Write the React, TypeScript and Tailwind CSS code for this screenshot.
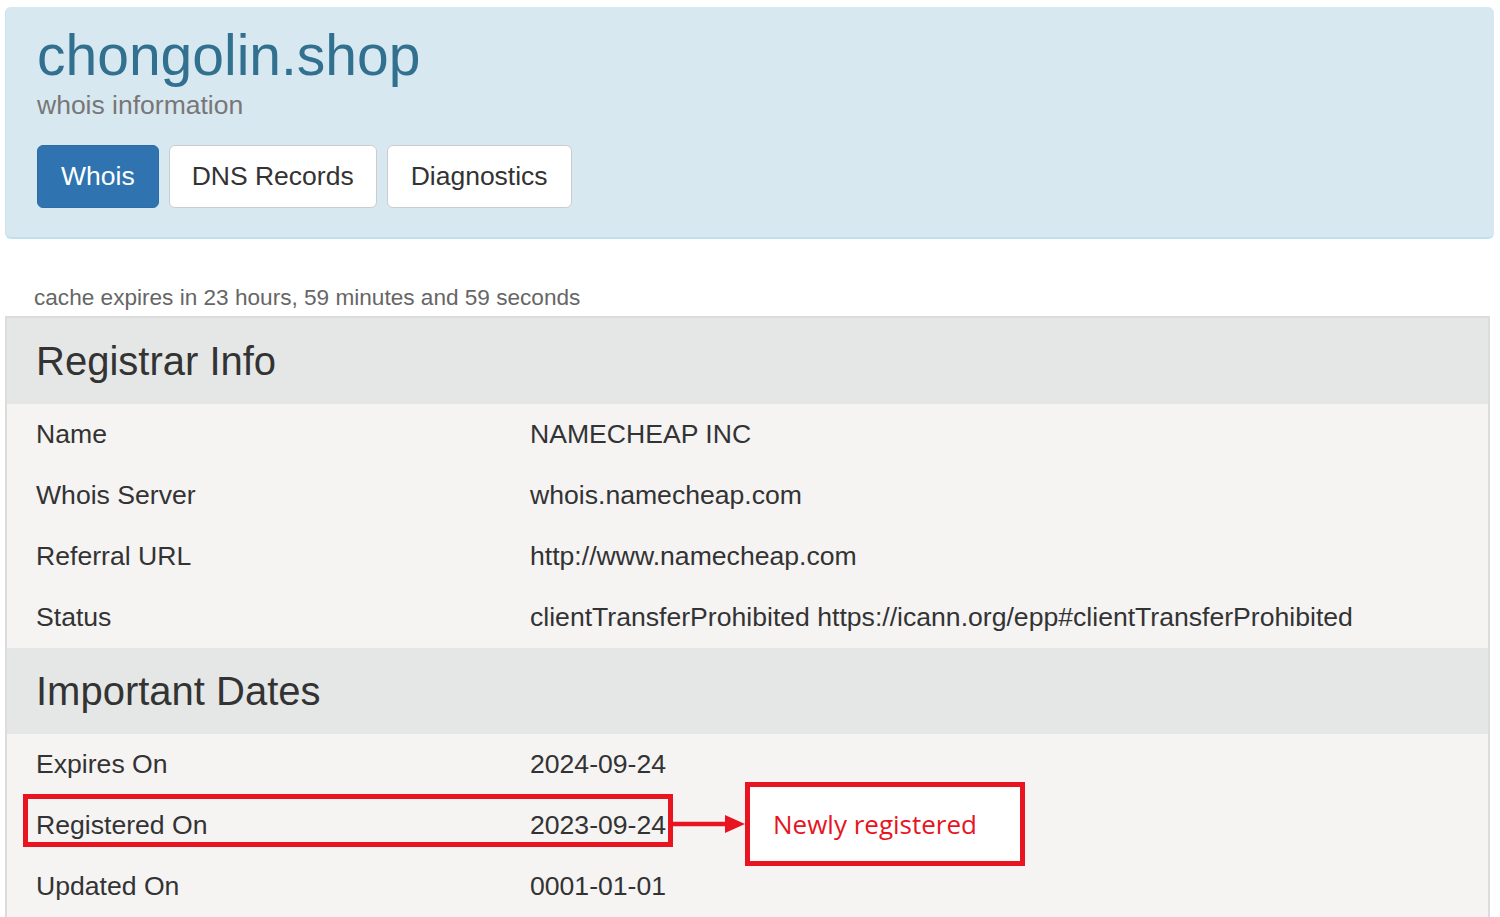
const sans = { fontFamily: '"Liberation Sans", Arial, sans-serif' };

type Row = { label: string; value: string };

const registrar: Row[] = [
  { label: "Name", value: "NAMECHEAP INC" },
  { label: "Whois Server", value: "whois.namecheap.com" },
  { label: "Referral URL", value: "http://www.namecheap.com" },
  {
    label: "Status",
    value:
      "clientTransferProhibited https://icann.org/epp#clientTransferProhibited",
  },
];

const dates: Row[] = [
  { label: "Expires On", value: "2024-09-24" },
  { label: "Registered On", value: "2023-09-24" },
  { label: "Updated On", value: "0001-01-01" },
];

const SectionHeader = ({ title }: { title: string }) => (
  <div className="h-[86px] bg-[#e5e7e6] flex items-center pl-[29px]">
    <h3 className="text-[40px] leading-none text-[#333]">{title}</h3>
  </div>
);

const InfoRow = ({ row, children }: { row: Row; children?: React.ReactNode }) => (
  <div className="relative h-[61px] grid grid-cols-[494px_1fr] items-center pl-[29px] text-[26.6px] text-[#333]">
    <span>{row.label}</span>
    <span className="whitespace-nowrap">{row.value}</span>
    {children}
  </div>
);

// red callout drawn over the "Registered On" row
const Callout = () => (
  <>
    <div className="absolute left-[16px] top-[-1px] w-[650px] h-[53px] border-[5px] border-[#e8141f]" />
    <div className="absolute left-[666px] top-[-13px] flex items-center">
      <svg width="72" height="20" viewBox="0 0 72 20">
        <line x1="0" y1="10" x2="54" y2="10" stroke="#e8141f" strokeWidth="4.5" />
        <polygon points="52,1 72,10 52,19" fill="#e8141f" />
      </svg>
      <div className="w-[280px] h-[84px] border-[5px] border-[#e8141f] bg-white flex items-center pl-[23px]">
        <span
          className="text-[26px] text-[#e8141f]"
          style={{ fontFamily: '"Open Sans", "Noto Sans", sans-serif' }}
        >
          Newly registered
        </span>
      </div>
    </div>
  </>
);

export default function App() {
  return (
    <div className="bg-white min-h-screen pt-[7px] pl-[5px] pr-[6px]" style={sans}>
      {/* jumbotron */}
      <div className="bg-[#d8e8f1] rounded-[6px] border-l border-[#c9e2ec] border-b-2 border-b-[#bfe0ec] pt-[17px] pb-[29px] pl-[31px]">
        <h1 className="text-[57px] leading-[1.1] text-[#31708f]">chongolin.shop</h1>
        <p className="mt-[3px] text-[26.5px] leading-[1.2] text-[#777]">whois information</p>
        <div className="mt-[24px] flex gap-[10px]">
          <button className="h-[63px] px-[23px] rounded-[6px] border border-[#2e6da4] bg-[#2f74b0] text-white text-[26.5px]">
            Whois
          </button>
          <button className="h-[63px] px-[22px] rounded-[6px] border border-[#ccc] bg-white text-[#333] text-[26.5px]">
            DNS Records
          </button>
          <button className="h-[63px] px-[23px] rounded-[6px] border border-[#ccc] bg-white text-[#333] text-[26.5px]">
            Diagnostics
          </button>
        </div>
      </div>

      <p className="mt-[43px] pl-[29px] text-[22.6px] leading-[1.4] text-[#666]">
        cache expires in 23 hours, 59 minutes and 59 seconds
      </p>

      {/* whois table */}
      <div className="mt-[2px] mr-[4px] border-2 border-[#dcdcdc] bg-[#f5f4f3]">
        <SectionHeader title="Registrar Info" />
        {registrar.map((r) => (
          <InfoRow key={r.label} row={r} />
        ))}
        <SectionHeader title="Important Dates" />
        {dates.map((r) => (
          <InfoRow key={r.label} row={r}>
            {r.label === "Registered On" && <Callout />}
          </InfoRow>
        ))}
      </div>
    </div>
  );
}
